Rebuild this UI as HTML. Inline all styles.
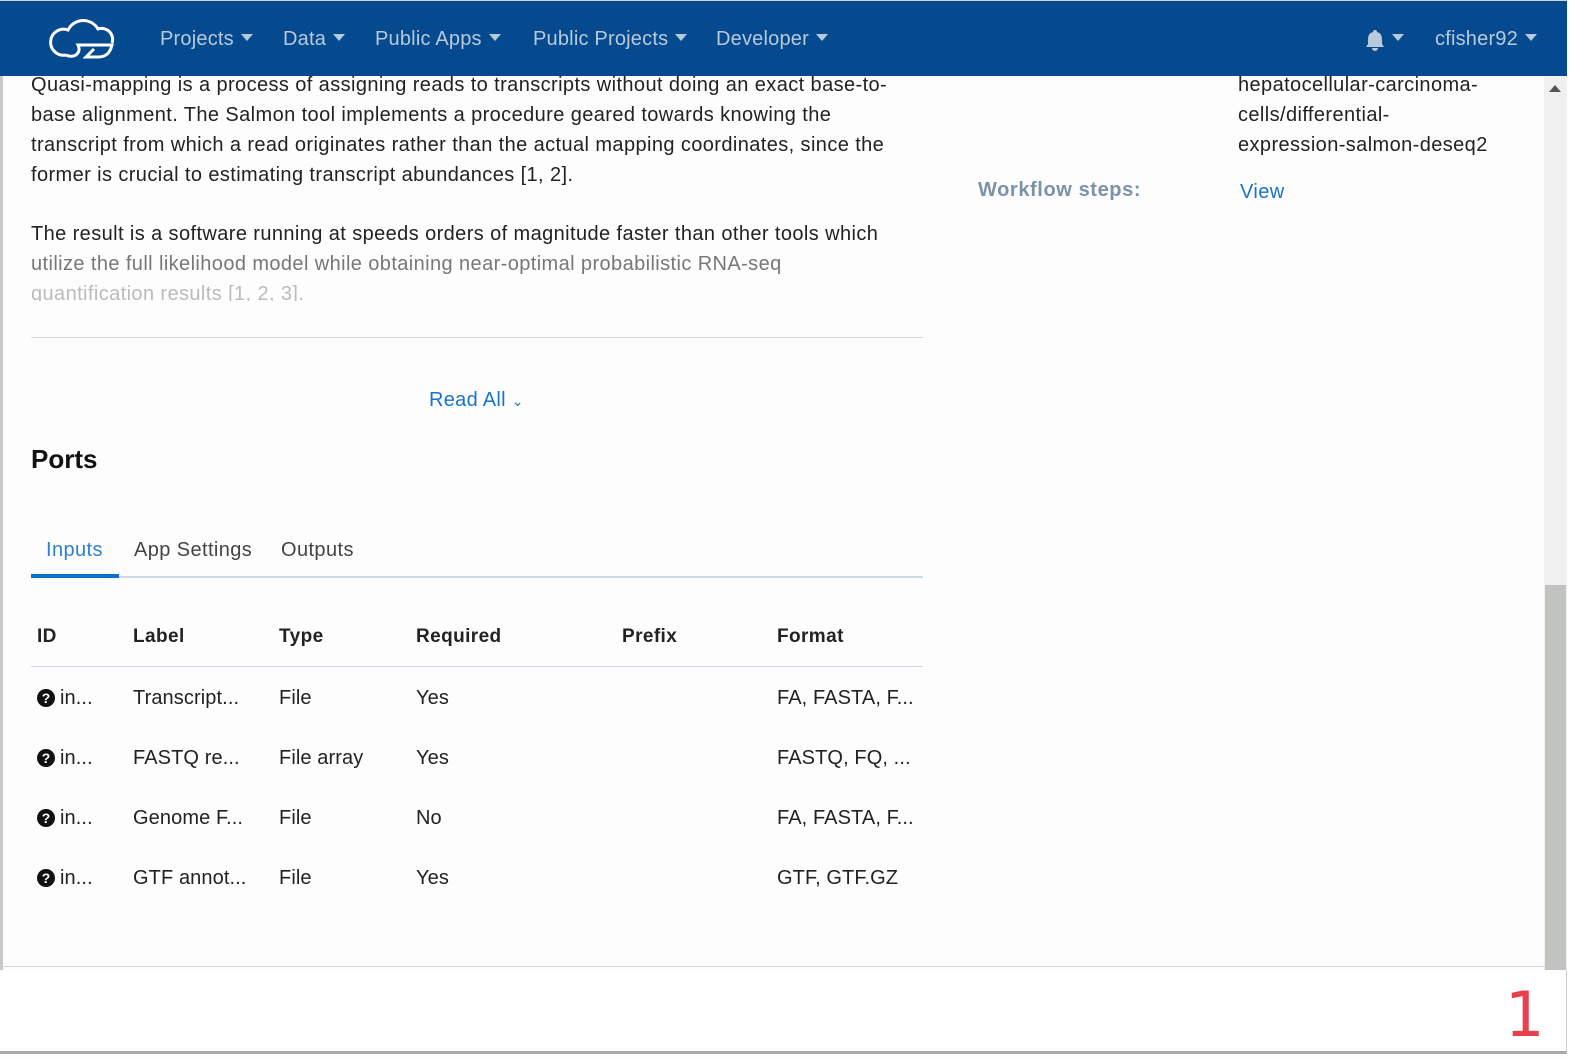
<!DOCTYPE html>
<html><head><meta charset="utf-8"><style>
*{margin:0;padding:0;box-sizing:border-box}
body{width:1573px;height:1057px;overflow:hidden;background:#fdfdfd;font-family:"Liberation Sans",sans-serif;color:#212529;position:relative}
.nav{position:absolute;left:0;top:0;width:1568px;height:76px;background:#054a8f;border-top:1px solid #cfd6dd}
.nav .it{position:absolute;top:27px;font-size:20px;color:#b9c9dc;white-space:nowrap;letter-spacing:0.2px}
.car{display:inline-block;width:0;height:0;border-left:6px solid transparent;border-right:6px solid transparent;border-top:7px solid #b9c9dc;vertical-align:middle;margin-left:7px;margin-top:-4px}
.p{position:absolute;font-size:20px;white-space:nowrap;line-height:30px;letter-spacing:0.4px}
.th{position:absolute;top:626px;font-size:19px;font-weight:bold;color:#222;letter-spacing:0.4px}
.td{position:absolute;font-size:20px;color:#222;white-space:nowrap;letter-spacing:0.1px}
.q{display:inline-block;width:18px;height:18px;border-radius:50%;background:#111;color:#fff;font-size:14px;font-weight:bold;text-align:center;line-height:18px;vertical-align:1px;margin-right:5px;letter-spacing:0}
</style></head><body>
<div style="position:absolute;left:0;top:76px;width:3px;height:895px;background:#c8c8c8"></div>
<div class="nav">
<svg style="position:absolute;left:48px;top:16px" width="68" height="46" viewBox="0 0 68 46" fill="none" stroke="#fff" stroke-width="3">
<path d="M18 38 A13 13 0 1 1 20 13 A17 17 0 0 1 50 12 A11 11 0 0 1 64 26"/>
<path d="M18 38 C26 42 34 36 30 28 L64 28 C62 36 58 40 50 40 L38 40 L46 32"/>
</svg>
<div class="it" style="left:160px">Projects<span class="car"></span></div>
<div class="it" style="left:283px">Data<span class="car"></span></div>
<div class="it" style="left:375px">Public Apps<span class="car"></span></div>
<div class="it" style="left:533px">Public Projects<span class="car"></span></div>
<div class="it" style="left:716px">Developer<span class="car"></span></div>
<svg style="position:absolute;left:1365px;top:28px" width="20" height="22" viewBox="0 0 20 22"><path d="M10 1a2 2 0 0 1 2 2c4 1 5 4 5 8v4l2 3H1l2-3v-4c0-4 1-7 5-8a2 2 0 0 1 2-2zM7 19h6a3 3 0 0 1-6 0z" fill="#b9c9dc"/></svg>
<span class="car" style="position:absolute;left:1385px;top:37px"></span>
<div class="it" style="left:1435px">cfisher92<span class="car"></span></div>
</div>
<div class="p" style="left:31px;top:70px;color:#222">Quasi-mapping is a process of assigning reads to transcripts without doing an exact base-to-</div>
<div class="p" style="left:31px;top:100px;color:#222">base alignment. The Salmon tool implements a procedure geared towards knowing the</div>
<div class="p" style="left:31px;top:130px;color:#222">transcript from which a read originates rather than the actual mapping coordinates, since the</div>
<div class="p" style="left:31px;top:160px;color:#222">former is crucial to estimating transcript abundances [1, 2].</div>
<div class="p" style="left:31px;top:219px;color:#222">The result is a software running at speeds orders of magnitude faster than other tools which</div>
<div class="p" style="left:31px;top:249px;color:#777">utilize the full likelihood model while obtaining near-optimal probabilistic RNA-seq</div>
<div class="p" style="left:31px;top:279px;color:#bbb;height:22px;overflow:hidden">quantification results [1, 2, 3].</div>
<div style="position:absolute;left:31px;top:337px;width:892px;height:1px;background:#d5d8dc"></div>
<div class="p" style="left:429px;top:385px;color:#1a73c8;letter-spacing:0.3px">Read All <span style="font-size:14px">&#8964;</span></div>
<div style="position:absolute;left:31px;top:444px;font-size:26px;font-weight:bold;color:#111">Ports</div>
<div class="p" style="left:46px;top:535px;color:#2f7fcf">Inputs</div>
<div class="p" style="left:134px;top:535px;color:#444">App Settings</div>
<div class="p" style="left:281px;top:535px;color:#444">Outputs</div>
<div style="position:absolute;left:31px;top:576px;width:892px;height:2px;background:#d0d8e2"></div>
<div style="position:absolute;left:31px;top:574px;width:88px;height:4px;background:#0b72c8"></div>
<div class="th" style="left:37px">ID</div><div class="th" style="left:133px">Label</div><div class="th" style="left:279px">Type</div><div class="th" style="left:416px">Required</div><div class="th" style="left:622px">Prefix</div><div class="th" style="left:777px">Format</div>
<div style="position:absolute;left:31px;top:666px;width:892px;height:1px;background:#cfd6e0"></div>
<div class="td" style="left:37px;top:687px"><span class="q">?</span>in...</div><div class="td" style="left:133px;top:687px">Transcript...</div><div class="td" style="left:279px;top:687px">File</div><div class="td" style="left:416px;top:687px">Yes</div><div class="td" style="left:777px;top:687px">FA, FASTA, F...</div>
<div class="td" style="left:37px;top:747px"><span class="q">?</span>in...</div><div class="td" style="left:133px;top:747px">FASTQ re...</div><div class="td" style="left:279px;top:747px">File array</div><div class="td" style="left:416px;top:747px">Yes</div><div class="td" style="left:777px;top:747px">FASTQ, FQ, ...</div>
<div class="td" style="left:37px;top:807px"><span class="q">?</span>in...</div><div class="td" style="left:133px;top:807px">Genome F...</div><div class="td" style="left:279px;top:807px">File</div><div class="td" style="left:416px;top:807px">No</div><div class="td" style="left:777px;top:807px">FA, FASTA, F...</div>
<div class="td" style="left:37px;top:867px"><span class="q">?</span>in...</div><div class="td" style="left:133px;top:867px">GTF annot...</div><div class="td" style="left:279px;top:867px">File</div><div class="td" style="left:416px;top:867px">Yes</div><div class="td" style="left:777px;top:867px">GTF, GTF.GZ</div>
<div class="p" style="left:1238px;top:70px;color:#222">hepatocellular-carcinoma-</div>
<div class="p" style="left:1238px;top:100px;color:#222">cells/differential-</div>
<div class="p" style="left:1238px;top:130px;color:#222">expression-salmon-deseq2</div>
<div class="p" style="left:978px;top:175px;color:#7a93ab;font-weight:bold;letter-spacing:0.6px">Workflow steps:</div>
<div class="p" style="left:1240px;top:177px;color:#1a73c8">View</div>
<div style="position:absolute;left:1544px;top:76px;width:23px;height:894px;background:#f0f0f0"></div>
<div style="position:absolute;left:1549px;top:85px;border-left:6px solid transparent;border-right:6px solid transparent;border-bottom:7px solid #555"></div>
<div style="position:absolute;left:1545px;top:585px;width:21px;height:385px;background:#c1c3bf"></div>
<div style="position:absolute;left:0;top:966px;width:1545px;height:1px;background:#d5d5de"></div>
<div style="position:absolute;left:0;top:970px;width:1567px;height:84px;background:#fff;border-bottom:3px solid #aaa;border-right:1px solid #ccc"></div>
<div style="position:absolute;left:1505px;top:978px;font-size:62px;color:#e8404e;font-family:'DejaVu Sans',sans-serif">1</div>
<div style="position:absolute;left:1567px;top:0;width:6px;height:1057px;background:#fff"></div>
</body></html>
